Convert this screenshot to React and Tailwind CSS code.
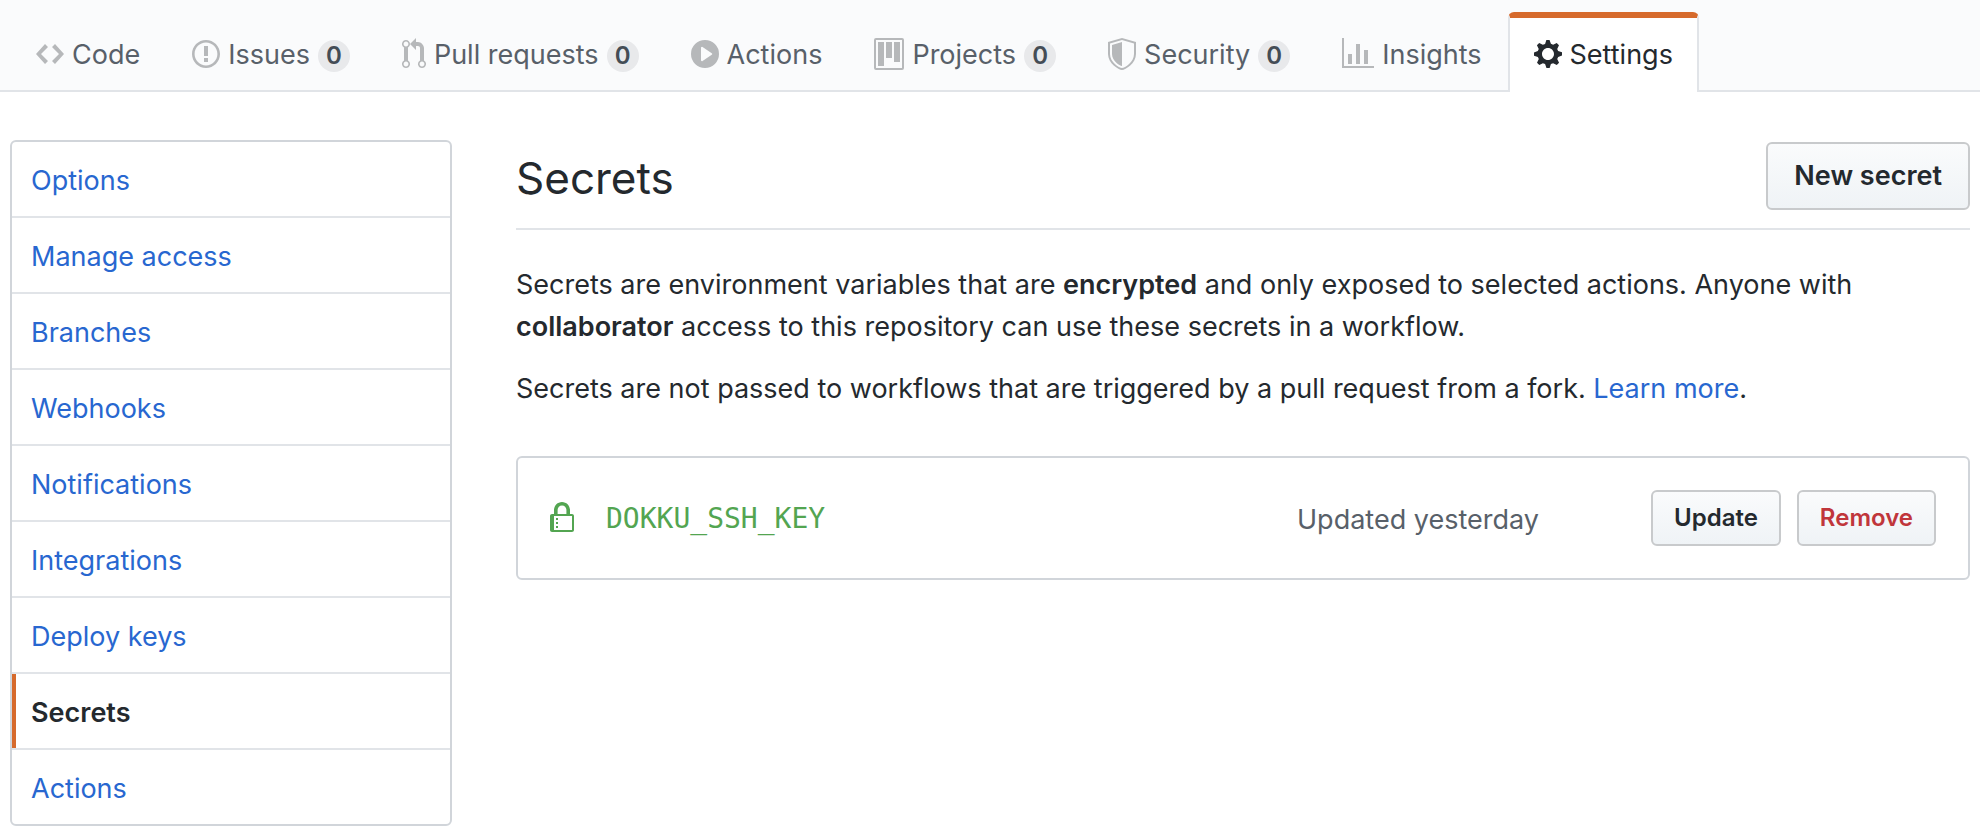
const icons = {
  code: {
    width: 14,
    d: "M9.5 3L8 4.5 11.5 8 8 11.5 9.5 13 14 8 9.5 3zm-5 0L0 8l4.5 5L6 11.5 2.5 8 6 4.5 4.5 3z",
  },
  issue: {
    width: 14,
    d: "M7 2.3c3.14 0 5.7 2.56 5.7 5.7s-2.56 5.7-5.7 5.7A5.71 5.71 0 0 1 1.3 8c0-3.14 2.56-5.7 5.7-5.7zM7 1C3.14 1 0 4.14 0 8s3.14 7 7 7 7-3.14 7-7-3.14-7-7-7zm1 3H6v5h2V4zm0 6H6v2h2v-2z",
  },
  pull: {
    width: 12,
    d: "M11 11.28V5c-.03-.78-.34-1.47-.94-2.06C9.46 2.35 8.78 2.03 8 2H7V0L4 3l3 3V4h1c.27.02.48.11.69.31.21.2.3.42.31.69v6.28A1.993 1.993 0 0 0 10 15a1.993 1.993 0 0 0 1-3.72zm-1 2.92c-.66 0-1.2-.55-1.2-1.2 0-.65.55-1.2 1.2-1.2.65 0 1.2.55 1.2 1.2 0 .65-.55 1.2-1.2 1.2zM4 3c0-1.11-.89-2-2-2a1.993 1.993 0 0 0-1 3.72v6.56A1.993 1.993 0 0 0 2 15a1.993 1.993 0 0 0 1-3.72V4.72c.59-.34 1-.98 1-1.72zm-.8 10c0 .66-.55 1.2-1.2 1.2-.65 0-1.2-.55-1.2-1.2 0-.65.55-1.2 1.2-1.2.65 0 1.2.55 1.2 1.2zM2 4.2C1.34 4.2.8 3.65.8 3c0-.65.55-1.2 1.2-1.2.65 0 1.2.55 1.2 1.2 0 .65-.55 1.2-1.2 1.2z",
  },
  play: {
    width: 14,
    d: "M14 8A7 7 0 1 1 0 8a7 7 0 0 1 14 0zm-8.223 3.482l4.599-3.066a.5.5 0 0 0 0-.832L5.777 4.518A.5.5 0 0 0 5 4.934v6.132a.5.5 0 0 0 .777.416z",
  },
  project: {
    width: 15,
    d: "M10 12h3V2h-3v10zm-4-2h3V2H6v8zm-4 4h3V2H2v12zm-1 1h13V1H1v14zM14 0H1a1 1 0 0 0-1 1v14a1 1 0 0 0 1 1h13a1 1 0 0 0 1-1V1a1 1 0 0 0-1-1z",
  },
  shield: {
    width: 14,
    d: "M0 2l7-2 7 2v6.02C14 12.69 8.69 16 7 16c-1.69 0-7-3.31-7-7.98V2zm1 .75L7 1l6 1.75v5.268C13 12.104 8.449 15 7 15c-1.449 0-6-2.896-6-6.982V2.75zm1 .75L7 2v12c-1.207 0-5-2.482-5-5.985V3.5z",
  },
  graph: {
    width: 16,
    d: "M16 14v1H0V0h1v14h15zM5 13H3V8h2v5zm4 0H7V3h2v10zm4 0h-2V6h2v7z",
  },
  gear: {
    width: 14,
    d: "M14 8.77v-1.6l-1.94-.64-.45-1.09.88-1.84-1.13-1.13-1.81.91-1.09-.45-.69-1.92h-1.6l-.63 1.94-1.11.45-1.84-.88-1.13 1.13.91 1.81-.45 1.09L0 7.23v1.59l1.94.64.45 1.09-.88 1.84 1.13 1.13 1.81-.91 1.09.45.69 1.92h1.59l.63-1.94 1.11-.45 1.84.88 1.13-1.13-.92-1.81.47-1.09L14 8.75v.02zM7 11c-1.66 0-3-1.34-3-3s1.34-3 3-3 3 1.34 3 3-1.34 3-3 3z",
  },
  lock: {
    width: 12,
    d: "M4 13H3v-1h1v1zm8-6v7c0 .55-.45 1-1 1H1c-.55 0-1-.45-1-1V7c0-.55.45-1 1-1h1V4c0-2.2 1.8-4 4-4s4 1.8 4 4v2h1c.55 0 1 .45 1 1zM3.8 6h4.41V4c0-1.22-.98-2.2-2.2-2.2-1.22 0-2.2.98-2.2 2.2v2H3.8zM11 7H2v7h9V7zM4 8H3v1h1V8zm0 2H3v1h1v-1z",
  },
};

const tabs = [
  { label: "Code", icon: "code" },
  { label: "Issues", icon: "issue", count: 0 },
  { label: "Pull requests", icon: "pull", count: 0 },
  { label: "Actions", icon: "play" },
  { label: "Projects", icon: "project", count: 0 },
  { label: "Security", icon: "shield", count: 0 },
  { label: "Insights", icon: "graph" },
  { label: "Settings", icon: "gear", current: true },
];

const menu = [
  "Options",
  "Manage access",
  "Branches",
  "Webhooks",
  "Notifications",
  "Integrations",
  "Deploy keys",
  "Secrets",
  "Actions",
];

function Icon({ name, className = "" }) {
  const { width, d } = icons[name];
  return (
    <svg
      className={`shrink-0 ${className}`}
      width={width * 2}
      height={32}
      viewBox={`0 0 ${width} 16`}
      fill="currentColor"
      fillRule="evenodd"
      aria-hidden="true"
    >
      <path d={d} />
    </svg>
  );
}

function Tab({ label, icon, count, current }) {
  return (
    <a
      href="#"
      aria-current={current ? "page" : undefined}
      className={`-mb-[2px] flex h-20 items-center rounded-t-md border-x-2 border-t-6 px-6 pb-[2px] whitespace-nowrap ${
        current
          ? "border-x-[#e1e4e8] border-t-[#d66a2c] bg-white text-[#24292e]"
          : "border-transparent text-[#586069]"
      }`}
    >
      <Icon name={icon} className={current ? "" : "text-[#b6b8ba]"} />
      <span className="ml-2 pt-[2px]">{label}</span>
      {count !== undefined && (
        <span className="mt-1 ml-2 flex h-8 w-8 items-center justify-center rounded-full bg-[#e8e9eb] text-2xl leading-8 font-semibold text-[#444d56]">
          {count}
        </span>
      )}
    </a>
  );
}

function Button({ small, danger, children }) {
  return (
    <button
      type="button"
      className={`rounded-md border-2 border-[#c8cacc] bg-linear-to-b from-[#fafbfc] to-[#eff3f6] font-semibold whitespace-nowrap ${
        small ? "h-14 px-[21px] text-2xl" : "h-17 px-[26px] text-[27px]"
      } ${danger ? "text-[#c0363b]" : "text-[#24292e]"}`}
    >
      {children}
    </button>
  );
}

export default function App() {
  return (
    <div className="min-h-screen bg-white font-['Inter','Liberation_Sans',sans-serif] text-[27px] leading-[42px] text-[#24292e]">
      <nav
        aria-label="Repository"
        className="flex border-b-2 border-[#e1e4e8] bg-[#fafbfc] pt-3 pl-[10px]"
      >
        {tabs.map((tab) => (
          <Tab key={tab.label} {...tab} />
        ))}
      </nav>

      <div className="flex items-start gap-16 px-[10px] pt-12 pb-3">
        <nav
          aria-label="Settings"
          className="w-[442px] shrink-0 divide-y-2 divide-[#e1e4e8] overflow-hidden rounded-md border-2 border-[#d1d5da]"
        >
          {menu.map((item) =>
            item === "Secrets" ? (
              <a
                key={item}
                href="#"
                aria-current="page"
                className="relative block px-[19px] pt-[18px] pb-[14px] font-semibold text-[#24292e]"
              >
                <span className="absolute inset-y-0 left-0 w-1 bg-[#d66a2c]" />
                {item}
              </a>
            ) : (
              <a key={item} href="#" className="block px-[19px] pt-[18px] pb-[14px] text-[#2867d0]">
                {item}
              </a>
            )
          )}
        </nav>

        <main className="min-w-0 flex-1">
          <header className="flex items-center justify-between border-b-2 border-[#e1e4e8] pt-[2px] pb-[18px]">
            <h1 className="pt-1 text-[44px] leading-[64px]">Secrets</h1>
            <Button>New secret</Button>
          </header>

          <p className="mt-[34px]">
            Secrets are environment variables that are <strong className="font-semibold">encrypted</strong> and only
            exposed to selected actions. Anyone with <br />
            <strong className="font-semibold">collaborator</strong> access to this repository can use these secrets in
            a workflow.
          </p>
          <p className="mt-5">
            Secrets are not passed to workflows that are triggered by a pull request from a fork.{" "}
            <a href="#" className="text-[#2867d0]">
              Learn more
            </a>
            .
          </p>

          <ul className="mt-[46px] rounded-md border-2 border-[#d1d5da]">
            <li className="flex items-center p-8">
              <Icon name="lock" className="text-[#53a551]" />
              <code className="ml-8 flex-1 pt-[2px] font-['DejaVu_Sans_Mono',monospace] text-[28px] text-[#53a551]">
                DOKKU_SSH_KEY
              </code>
              <span className="w-[354px] pt-1 text-[#586069]">Updated yesterday</span>
              <div className="flex gap-4">
                <Button small>Update</Button>
                <Button small danger>
                  Remove
                </Button>
              </div>
            </li>
          </ul>
        </main>
      </div>
    </div>
  );
}
